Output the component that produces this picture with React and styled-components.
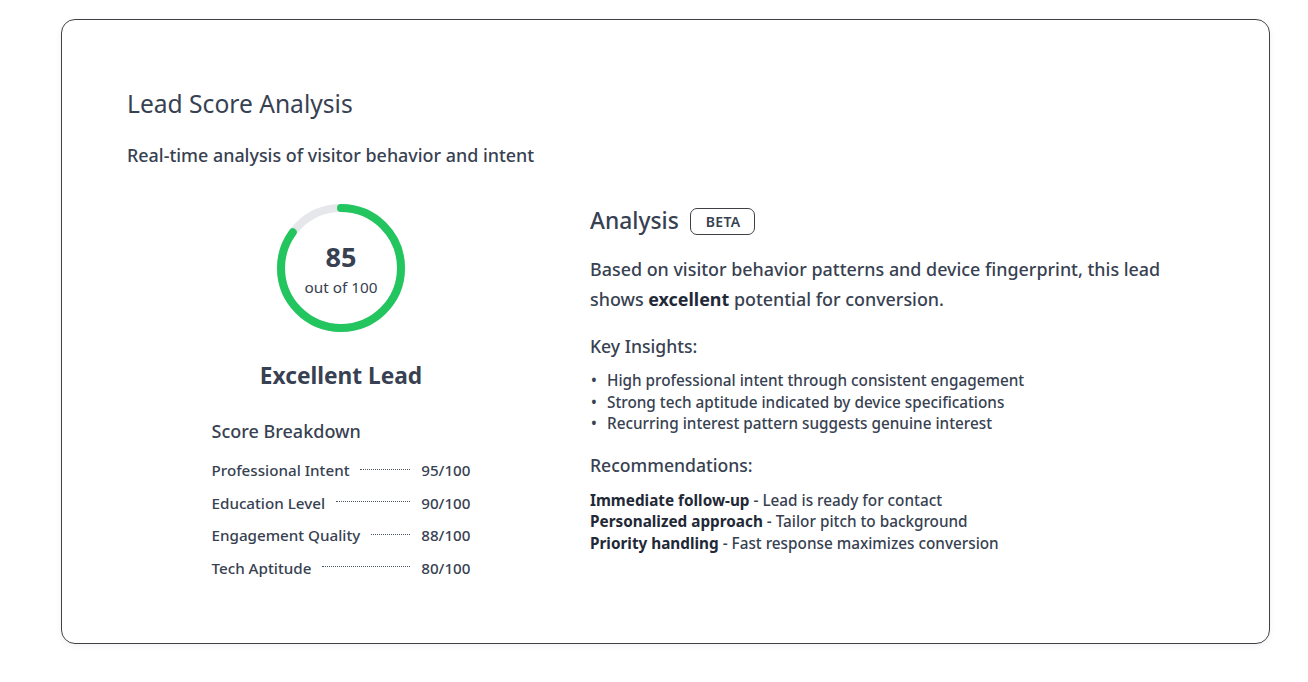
import React from 'react'
import styled, { createGlobalStyle } from 'styled-components'

const GlobalStyle = createGlobalStyle`
  * { box-sizing: border-box; }
  body {
    margin: 0;
    background: #fff;
    font-family: 'Noto Sans', 'Open Sans', sans-serif;
    color: #374151;
  }
`

const scores = [
  { label: 'Professional Intent', value: 95 },
  { label: 'Education Level', value: 90 },
  { label: 'Engagement Quality', value: 88 },
  { label: 'Tech Aptitude', value: 80 },
]

const insights = [
  'High professional intent through consistent engagement',
  'Strong tech aptitude indicated by device specifications',
  'Recurring interest pattern suggests genuine interest',
]

const recs = [
  { title: 'Immediate follow-up', text: 'Lead is ready for contact' },
  { title: 'Personalized approach', text: 'Tailor pitch to background' },
  { title: 'Priority handling', text: 'Fast response maximizes conversion' },
]

const ScoreRing = ({ score }) => {
  const r = 60
  const c = 2 * Math.PI * r
  return (
    <RingWrap>
      <svg width="130" height="130" viewBox="0 0 130 130">
        <circle cx="65" cy="65" r={r} fill="none" stroke="#e5e7eb" strokeWidth="8" />
        <circle
          cx="65"
          cy="65"
          r={r}
          fill="none"
          stroke="#22c55e"
          strokeWidth="8"
          strokeLinecap="round"
          strokeDasharray={`${(c * score) / 100} ${c}`}
          transform="rotate(-90 65 65)"
        />
      </svg>
      <RingText>
        <Big>{score}</Big>
        <Small>out of 100</Small>
      </RingText>
    </RingWrap>
  )
}

const App = () => {
  return (
    <Page>
      <GlobalStyle />
      <Card>
        <Title>Lead Score Analysis</Title>
        <Subtitle>Real-time analysis of visitor behavior and intent</Subtitle>
        <Grid>
          <Left>
            <ScoreRing score={85} />
            <LeadLabel>Excellent Lead</LeadLabel>
            <Breakdown>
              <BreakdownTitle>Score Breakdown</BreakdownTitle>
              <Rows>
                {scores.map((s) => (
                  <Row key={s.label}>
                    <span>{s.label}</span>
                    <Dots />
                    <span>{s.value}/100</span>
                  </Row>
                ))}
              </Rows>
            </Breakdown>
          </Left>
          <Right>
            <HeadingRow>
              <Heading>Analysis</Heading>
              <Badge>BETA</Badge>
            </HeadingRow>
            <Lead>
              Based on visitor behavior patterns and device fingerprint, this lead shows{' '}
              <strong>excellent</strong> potential for conversion.
            </Lead>
            <SubHeading>Key Insights:</SubHeading>
            <List>
              {insights.map((i) => (
                <li key={i}>{i}</li>
              ))}
            </List>
            <SubHeading $gap={18}>Recommendations:</SubHeading>
            <Recs>
              {recs.map((r) => (
                <div key={r.title}>
                  <strong>{r.title}</strong> - {r.text}
                </div>
              ))}
            </Recs>
          </Right>
        </Grid>
      </Card>
    </Page>
  )
}

const Page = styled.div`
  padding: 19px 38px 38px 61px;
`

const Card = styled.div`
  width: 1209px;
  height: 625px;
  border: 1px solid #3f4147;
  border-radius: 14px;
  box-shadow: 0 2px 6px rgba(0, 0, 0, 0.06);
  padding: 68px 64px 0 65px;
`

const Title = styled.h1`
  margin: 0;
  font-size: 24.6px;
  line-height: 31px;
  font-weight: 400;
  color: #374151;
`

const Subtitle = styled.p`
  margin: 24px 0 0;
  font-size: 17.9px;
  line-height: 24px;
  font-weight: 500;
`

const Grid = styled.div`
  display: grid;
  grid-template-columns: 428px 1fr;
  column-gap: 35px;
  margin-top: 36px;
`

const Left = styled.div`
  display: flex;
  flex-direction: column;
  align-items: center;
`

const RingWrap = styled.div`
  position: relative;
  width: 130px;
  height: 130px;
  svg { display: block; }
`

const RingText = styled.div`
  position: absolute;
  inset: 0;
  display: flex;
  flex-direction: column;
  align-items: center;
  justify-content: center;
  padding-top: 2px;
`

const Big = styled.div`
  font-size: 27px;
  line-height: 30px;
  font-weight: 700;
`

const Small = styled.div`
  font-size: 15.3px;
  line-height: 20px;
  margin-top: 5px;
`

const LeadLabel = styled.div`
  margin-top: 28px;
  font-size: 22.7px;
  line-height: 30px;
  font-weight: 700;
`

const Breakdown = styled.div`
  width: 259px;
  margin-top: 28px;
`

const BreakdownTitle = styled.div`
  font-size: 18px;
  line-height: 24px;
  font-weight: 500;
`

const Rows = styled.div`
  display: flex;
  flex-direction: column;
  gap: 10.5px;
  margin-top: 16px;
`

const Row = styled.div`
  display: flex;
  align-items: center;
  font-size: 15.2px;
  line-height: 22px;
  font-weight: 500;
`

const Dots = styled.span`
  flex: 1;
  margin: 0 11px;
  border-bottom: 1px dotted #4b5563;
  transform: translateY(-1px);
`

const Right = styled.div`
  display: flex;
  flex-direction: column;
  align-items: flex-start;
`

const HeadingRow = styled.div`
  display: flex;
  align-items: center;
  gap: 11px;
  margin-top: 3px;
`

const Heading = styled.h2`
  margin: 0;
  font-size: 22.8px;
  line-height: 30px;
  font-weight: 500;
`

const Badge = styled.span`
  display: inline-flex;
  align-items: center;
  height: 27px;
  padding: 0 14px 0 15px;
  border: 1px solid #3f4147;
  border-radius: 7px;
  font-size: 14px;
  font-weight: 600;
  letter-spacing: 0.3px;
`

const Lead = styled.p`
  margin: 18px 0 0;
  max-width: 600px;
  font-size: 17.9px;
  line-height: 30px;
  font-weight: 500;
  strong { font-weight: 700; color: #1f2937; }
`

const SubHeading = styled.h3`
  margin: ${(p) => p.$gap || 20}px 0 0;
  font-size: 17.6px;
  line-height: 24px;
  font-weight: 500;
`

const List = styled.ul`
  margin: 12px 0 0;
  padding: 0;
  list-style: none;
  font-size: 15.3px;
  line-height: 21.5px;
  font-weight: 500;
  li {
    position: relative;
    padding-left: 17px;
  }
  li::before {
    content: '•';
    position: absolute;
    left: 1px;
  }
`

const Recs = styled.div`
  margin-top: 13px;
  font-size: 15.3px;
  line-height: 21.5px;
  font-weight: 500;
  strong { font-weight: 700; color: #1f2937; }
`

export default App
